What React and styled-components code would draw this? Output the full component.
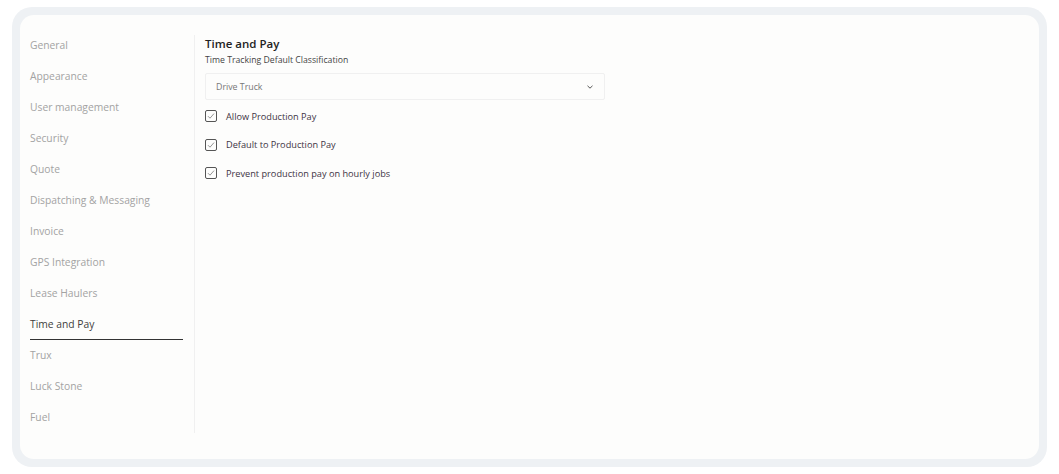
import styled, { createGlobalStyle } from "styled-components";

const GlobalStyle = createGlobalStyle`
  html, body {
    margin: 0;
    padding: 0;
    background: #ffffff;
    font-family: "Open Sans", "Liberation Sans", sans-serif;
  }
`;

const Page = styled.div`
  padding: 7px 12px;
  width: 1059px;
  height: 474px;
  box-sizing: border-box;
`;

const Frame = styled.div`
  background: #eef1f4;
  border-radius: 20px;
  padding: 8px;
  height: 460px;
  box-sizing: border-box;
  width: 1035px;
`;

const Panel = styled.div`
  background: #fdfdfc;
  border-radius: 14px;
  height: 100%;
  box-sizing: border-box;
  display: flex;
  align-items: flex-start;
  padding: 20px 0 0 10px;
`;

const Sidebar = styled.nav`
  width: 165px;
  height: 398px;
  border-right: 1px solid #f0f0f0;
  display: flex;
  flex-direction: column;
  padding-top: 3px;
  box-sizing: border-box;
`;

const NavItem = styled.div`
  flex-shrink: 0;
  height: 31px;
  font-size: 10.3px;
  line-height: 14px;
  color: ${(p) => (p.$active ? "#3d3d3d" : "#a3a3a3")};
`;

const NavLabel = styled.div`
  width: 153px;
  padding-bottom: 8px;
  border-bottom: ${(p) => (p.$active ? "1px solid #333" : "1px solid transparent")};
`;

const Content = styled.section`
  padding-left: 10px;
  width: 400px;
`;

const Title = styled.h2`
  margin: 0;
  font-size: 11.5px;
  font-weight: 600;
  color: #222;
  line-height: 17px;
`;

const Subtitle = styled.div`
  font-size: 8.7px;
  color: #444;
  margin-top: 2px;
  line-height: 12px;
`;

const Select = styled.div`
  margin-top: 7px;
  height: 27px;
  border: 1px solid #f0f0f0;
  border-radius: 2px;
  display: flex;
  align-items: center;
  justify-content: space-between;
  padding: 0 10px;
  font-size: 8.8px;
  color: #777;
  box-sizing: border-box;
`;

const Options = styled.div`
  margin-top: 2px;
`;

const CheckRow = styled.label`
  display: flex;
  align-items: center;
  gap: 9px;
  height: 28.5px;
  font-size: 9.2px;
  color: #3e3444;
`;

const Box = styled.span`
  width: 12px;
  height: 12px;
  box-sizing: border-box;
  border: 1.5px solid #555;
  border-radius: 2px;
  display: flex;
  align-items: center;
  justify-content: center;
`;

const Check = () => (
  <Box>
    <svg width="8" height="8" viewBox="0 0 8 8" fill="none">
      <path d="M1 4.2 L3 6.2 L7 1.6" stroke="#888" strokeWidth="0.9" />
    </svg>
  </Box>
);

const items = [
  "General",
  "Appearance",
  "User management",
  "Security",
  "Quote",
  "Dispatching & Messaging",
  "Invoice",
  "GPS Integration",
  "Lease Haulers",
  "Time and Pay",
  "Trux",
  "Luck Stone",
  "Fuel",
];

const options = [
  "Allow Production Pay",
  "Default to Production Pay",
  "Prevent production pay on hourly jobs",
];

export default function App() {
  return (
    <Page>
      <GlobalStyle />
      <Frame>
        <Panel>
          <Sidebar>
            {items.map((item) => (
              <NavItem key={item} $active={item === "Time and Pay"}>
                <NavLabel $active={item === "Time and Pay"}>{item}</NavLabel>
              </NavItem>
            ))}
          </Sidebar>
          <Content>
            <Title>Time and Pay</Title>
            <Subtitle>Time Tracking Default Classification</Subtitle>
            <Select>
              <span>Drive Truck</span>
              <svg width="8" height="6" viewBox="0 0 8 6" fill="none">
                <path d="M1.5 1.8 L4 4.2 L6.5 1.8" stroke="#555" strokeWidth="1" />
              </svg>
            </Select>
            <Options>
              {options.map((o) => (
                <CheckRow key={o}>
                  <Check />
                  {o}
                </CheckRow>
              ))}
            </Options>
          </Content>
        </Panel>
      </Frame>
    </Page>
  );
}
